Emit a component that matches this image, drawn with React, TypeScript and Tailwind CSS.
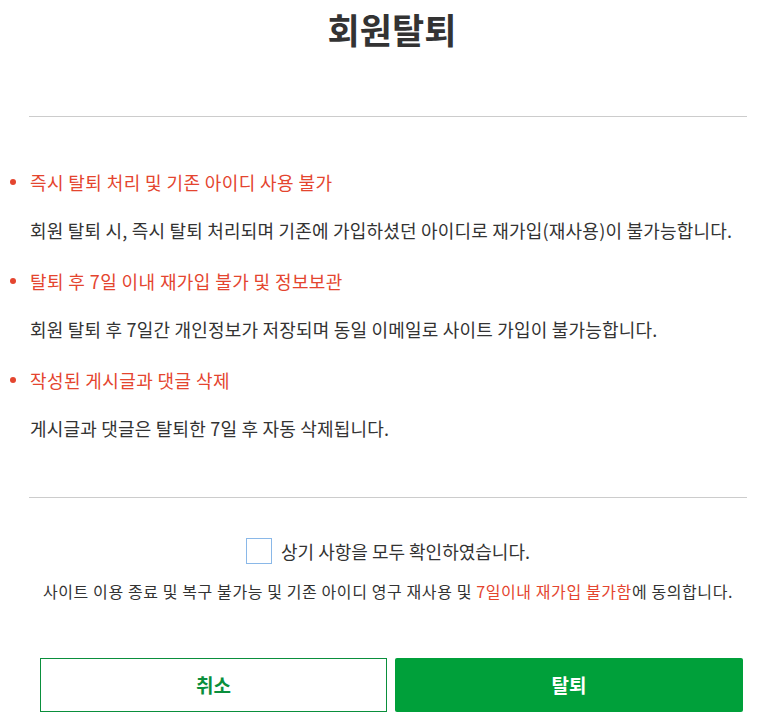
import React from "react";

const items = [
  {
    title: "즉시 탈퇴 처리 및 기존 아이디 사용 불가",
    desc: "회원 탈퇴 시, 즉시 탈퇴 처리되며 기존에 가입하셨던 아이디로 재가입(재사용)이 불가능합니다.",
  },
  {
    title: "탈퇴 후 7일 이내 재가입 불가 및 정보보관",
    desc: "회원 탈퇴 후 7일간 개인정보가 저장되며 동일 이메일로 사이트 가입이 불가능합니다.",
  },
  {
    title: "작성된 게시글과 댓글 삭제",
    desc: "게시글과 댓글은 탈퇴한 7일 후 자동 삭제됩니다.",
  },
];

const App = () => {
  return (
    <div className="w-[776px] h-[720px] bg-white font-['Noto_Sans_CJK_KR',sans-serif] text-[#333] overflow-hidden">
      <h1 className="pt-[7px] pl-[8px] text-center text-[35px] font-bold leading-[44px] text-[#333]">회원탈퇴</h1>

      <div className="mx-[29px] mt-[65px] border-t border-[#ccc]"></div>

      <ul className="mt-[52px] pl-[30px] pr-[10px]">
        {items.map((item) => (
          <li key={item.title} className="mb-[25px]">
            <div className="relative text-[18px] leading-[26px] tracking-[0.4px] text-[#e4452f]">
              <span className="absolute left-[-20px] top-[10px] w-[6px] h-[6px] rounded-full bg-[#e4452f]"></span>
              {item.title}
            </div>
            <p className="mt-[22px] text-[18px] leading-[26px] tracking-[0.2px] text-[#333] whitespace-nowrap">
              {item.desc}
            </p>
          </li>
        ))}
      </ul>

      <div className="mx-[29px] mt-[56px] border-t border-[#ccc]"></div>

      <div className="mt-[40px] flex items-center justify-center gap-[9px]">
        <span className="w-[26px] h-[26px] border border-[#8ab8e8] bg-white"></span>
        <span className="text-[18px] leading-[26px] text-[#333]">상기 사항을 모두 확인하였습니다.</span>
      </div>

      <p className="mt-[16px] text-center text-[16px] leading-[22px] tracking-[0.6px] text-[#333] whitespace-nowrap">
        사이트 이용 종료 및 복구 불가능 및 기존 아이디 영구 재사용 및{" "}
        <span className="text-[#e4452f]">7일이내 재가입 불가함</span>에 동의합니다.
      </p>

      <div className="ml-[40px] mr-[33px] mt-[56px] flex gap-[8px]">
        <button className="w-[347px] h-[54px] border border-[#0a8f3c] bg-white text-[19px] font-bold text-[#0a8f3c]">
          취소
        </button>
        <button className="flex-1 h-[54px] rounded-[2px] bg-[#00a03a] text-[19px] font-bold text-white">
          탈퇴
        </button>
      </div>
    </div>
  );
};

export default App;
